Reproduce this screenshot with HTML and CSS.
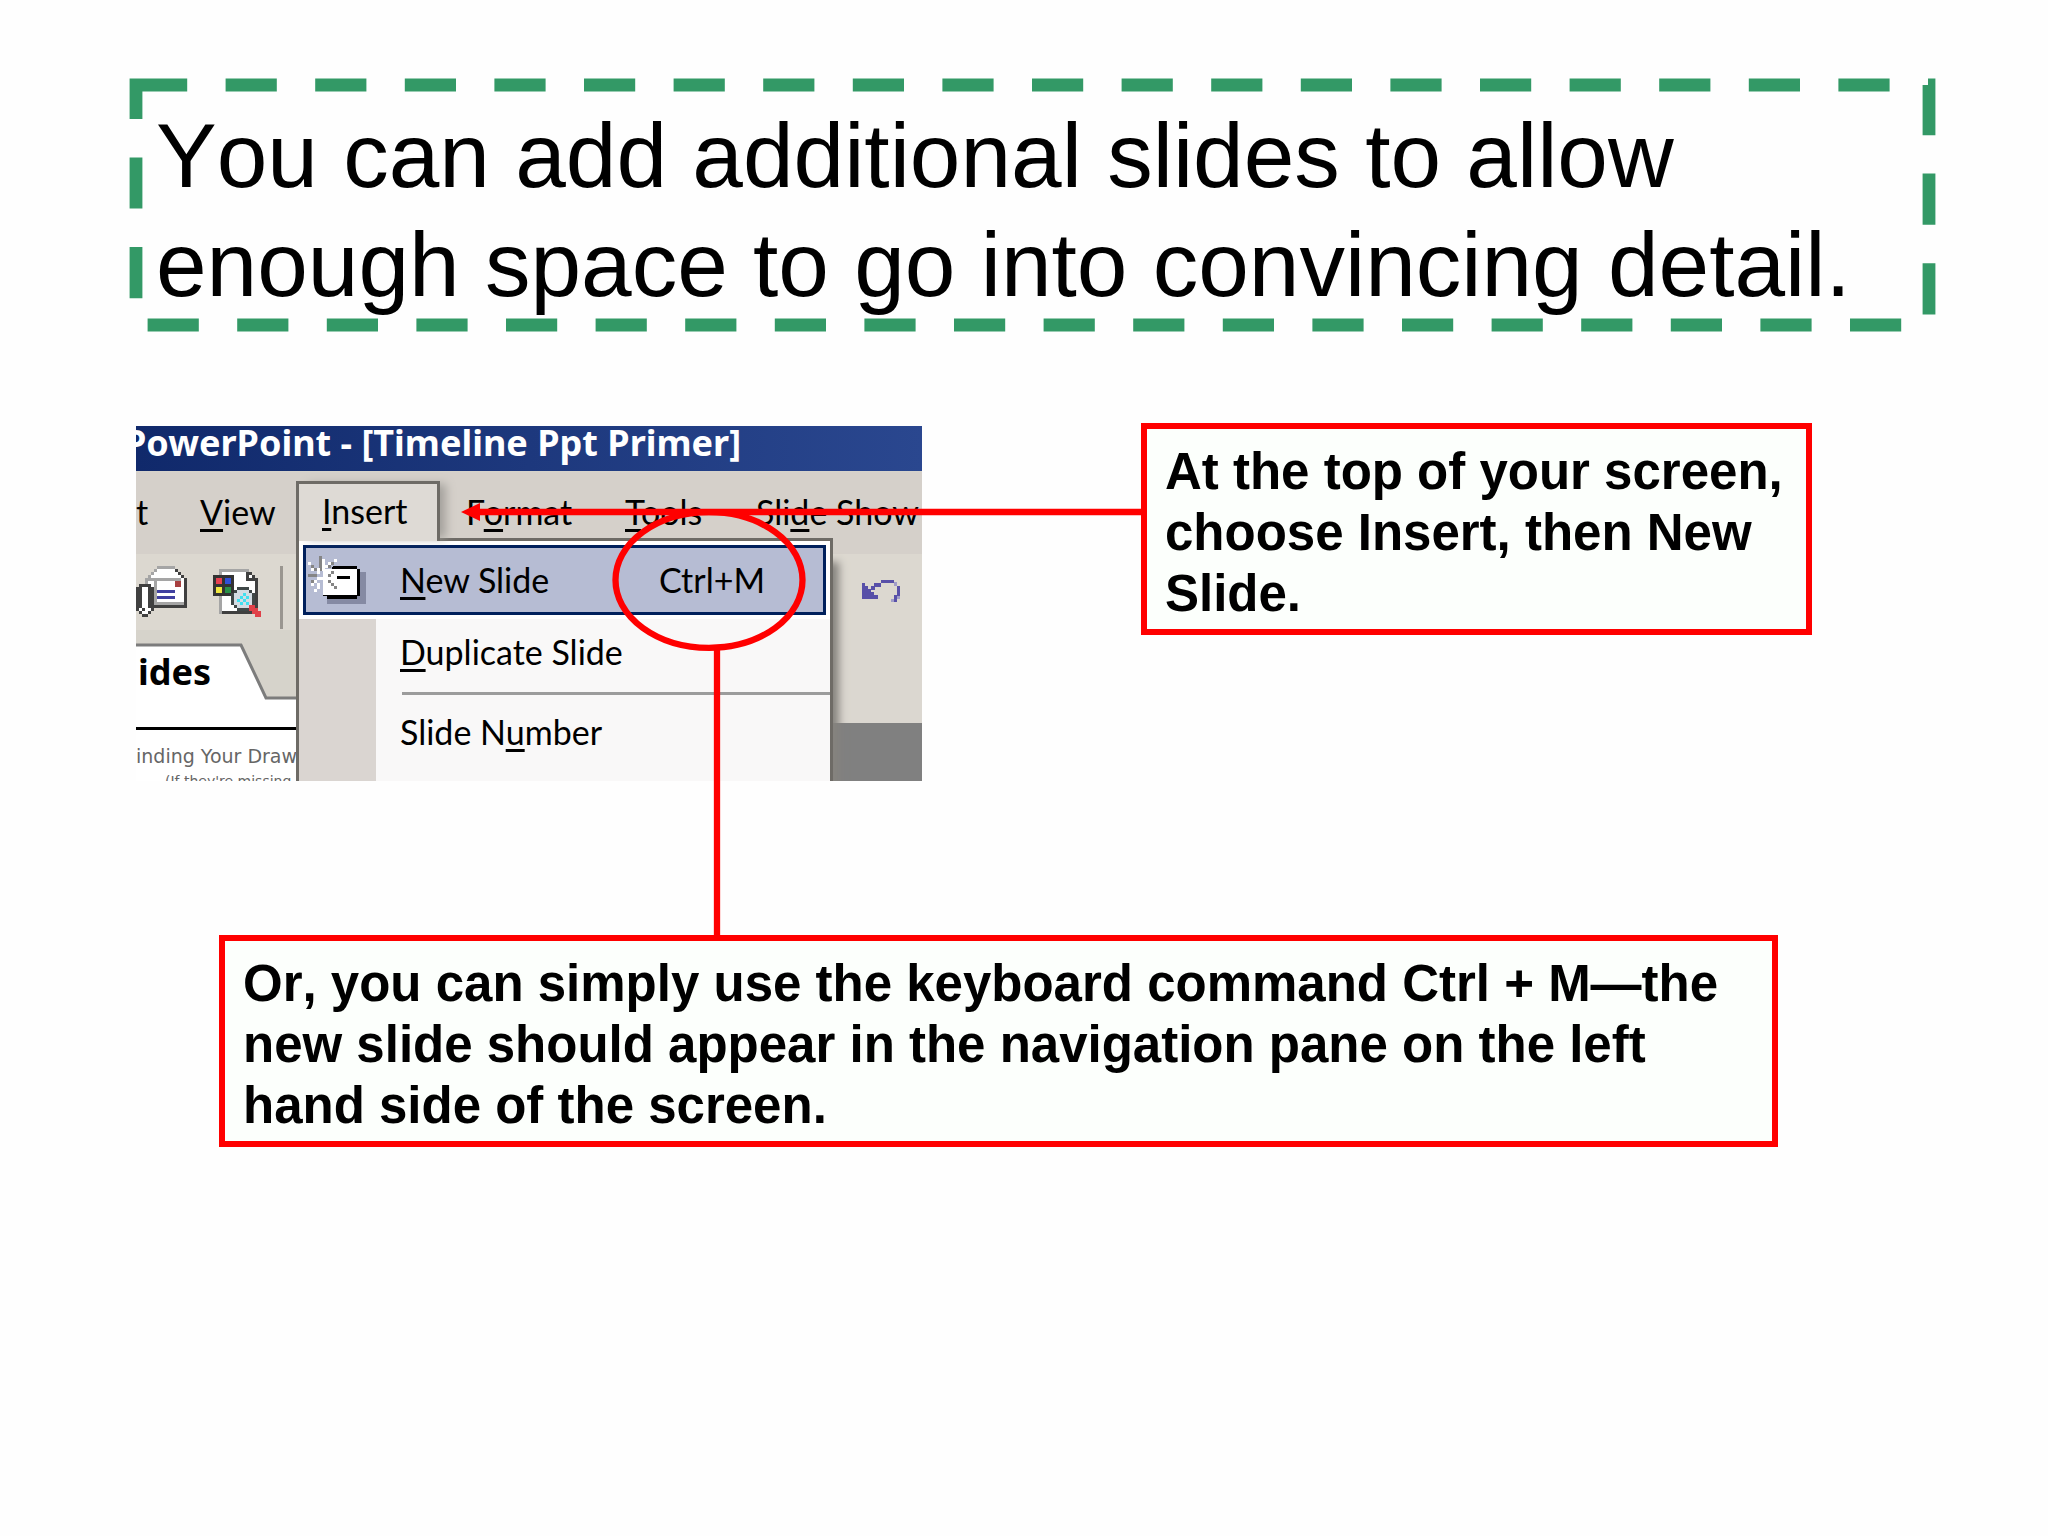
FILE: index.html
```html
<!DOCTYPE html>
<html lang="en">

<head>
    <meta charset="UTF-8">
    <title>Adding additional slides</title>
    <link rel="stylesheet" href="styles.css">
</head>

<body>
    <main class="slide">
        <header class="heading">
            <svg class="heading-border" aria-hidden="true">
                <rect class="dashes" />
            </svg>
            <h1>You can add additional slides to allow enough space to go into convincing detail.</h1>
        </header>

        <section class="row">
            <div class="shot">
                <div class="window">
                    <div class="titlebar"><span>PowerPoint - [Timeline Ppt Primer]</span></div>
                    <nav class="menubar">
                        <button>t</button>
                        <button><u>V</u>iew</button>
                        <button class="open"><u>I</u>nsert</button>
                        <button>F<u>o</u>rmat</button>
                        <button><u>T</u>ools</button>
                        <button>Sli<u>d</u>e Show</button>
                    </nav>
                    <div class="toolbar">
                        <button class="tool" aria-label="Mail">
                            <svg width="51" height="51" viewBox="0 0 17 17" shape-rendering="crispEdges">
                                <path fill="#fff" d="M7 1h6v1h1v1h1v1h1v9H6V7H3V5h1V4h1V3h1V2h1z" />
                                <path fill="#a5a5a5" d="M7 0h6v1H7zM6 1h1v1H6zM5 2h1v1H5zM4 3h1v1H4zM3 4h12v1H3zM3 5h1v2H3zM6 5h1v7h9v1H6z" />
                                <path fill="#404040" d="M13 1h1v1h-1zM14 2h1v1h-1zM15 3h1v1h-1zM16 4h1v10H6v-1h10z" />
                                <path fill="#a84040" d="M13 5h2v2h-2z" />
                                <path fill="#4040a0" d="M7 8h6v1H7zM7 10h6v1H7z" />
                                <path fill="#404040" d="M1 6h4v1h1v8H5v1H4v1H2v-1H1v-1H0V7h1z" />
                                <path fill="#fff" d="M2 7h2v8H2zM1 14h1v1H1zM4 14h1v1H4zM2 15h2v1H2z" />
                                <path fill="#404040" d="M2 14h1v1H2z" />
                            </svg>
                        </button>
                        <button class="tool" aria-label="Preview">
                            <svg width="48" height="48" viewBox="0 0 16 16" shape-rendering="crispEdges">
                                <path fill="#fff" d="M3 1h9v3h2v10H3z" />
                                <path fill="#a5a5a5" d="M2 0h10v1H3v14H2z" />
                                <path fill="#404040" d="M12 1h1v1h1v1h1v12H3v-1h11V4h-3V1z" />
                                <path fill="#fff" d="M12 2h1v1h-1z" />
                                <path fill="#333" d="M0 2h7v7H0z" />
                                <path fill="#e84050" d="M1 3h2v2H1z" />
                                <path fill="#3050d8" d="M4 3h2v2H4z" />
                                <path fill="#f0e840" d="M1 6h2v2H1z" />
                                <path fill="#289048" d="M4 6h2v2H4z" />
                                <path fill="#404848" d="M8 6h4v1h1v1h1v4h-1v1h-1v1H8v-1H7v-1H6V8h1V7h1z" />
                                <path fill="#d4dde4" d="M8 7h4v1h1v4h-1v1H8v-1H7V8h1z" />
                                <path fill="#40e0f0" d="M10 8h1v1h-1zM11 9h1v1h-1zM9 9h1v1H9zM8 10h1v1H8zM10 10h1v1h-1zM9 11h1v1H9zM11 11h1v1h-1z" />
                                <path fill="#e04048" d="M12 12h2v1h1v1h1v2h-2v-1h-1v-1h-1z" />
                            </svg>
                        </button>
                        <span class="divider"></span>
                        <button class="tool undo" aria-label="Undo">
                            <svg width="40" height="24" viewBox="0 0 40 24" shape-rendering="crispEdges">
                                <path fill="#5850a8" d="M0 3h3v3h3v3h3v3h3v3h4v4H0zM9 6h4v4H9zM12 3h7v4h-7zM19 0h13v3H19zM35 6h3v10h-3zM32 15h3v7h-3z" />
                                <path fill="#a09cc8" d="M32 2h3v4h-3zM35 16h3v3h-3zM29 19h3v3h-3z" />
                            </svg>
                        </button>
                    </div>
                    <div class="workspace">
                        <div class="pane">
                            <svg class="tab" width="160" height="57" viewBox="0 0 160 57" aria-hidden="true">
                                <path fill="#fff" stroke="#7c7c7c" stroke-width="3" d="M-3 2H105L130 55H163V60H-3z" />
                            </svg>
                            <strong class="tab-label">ides</strong>
                            <div class="outline">
                                <p>inding Your Draw</p>
                                <p class="second">(If they're missing</p>
                            </div>
                        </div>
                        <div class="canvas"></div>
                    </div>
                    <div class="dropdown">
                        <button class="item selected">
                            <svg width="58" height="48" viewBox="0 0 58 48" shape-rendering="crispEdges" aria-hidden="true">
                                <path fill="#858aa3" d="M19 16h39v32H19z" />
                                <path fill="#000" d="M25 10h24v3h3v27h-3v3H19v-3h-4V27h4z" />
                                <path fill="#fff" d="M15 13h34v26H15z" />
                                <path fill="#000" d="M29 20h13v3H29z" />
                                <path fill="#858585" d="M11 0h3v15h-3zM3 9h3v3H3zM0 18h9v3H0zM6 12h3v3H6zM3 24h3v3H3zM20 9h3v3h-3zM23 6h3v3h-3zM20 18h3v3h-3zM23 15h3v3h-3zM20 24h3v3h-3zM23 27h3v3h-3zM26 30h3v3h-3z" />
                                <path fill="#fff" d="M14 3h3v12h-3zM0 6h3v3H0zM3 12h3v3H3zM9 12h3v6H9zM17 9h3v3h-3zM20 6h3v3h-3zM26 3h3v3h-3zM6 24h3v3H6zM9 21h6v3H9zM3 27h3v3H3zM9 27h3v6H9zM6 33h3v3H6z" />
                            </svg>
                            <span><u>N</u>ew Slide</span>
                            <span class="shortcut">Ctrl+M</span>
                        </button>
                        <button class="item duplicate"><span><u>D</u>uplicate Slide</span></button>
                        <hr>
                        <button class="item number"><span>Slide N<u>u</u>mber</span></button>
                    </div>
                </div>
                <svg class="marks" aria-hidden="true">
                    <ellipse cx="573" cy="154" rx="93.5" ry="67.8" />
                    <path d="M1008 86H340M581 222V512" />
                    <path class="head" d="M325 86L344 77V95z" />
                </svg>
            </div>
            <p class="callout top">At the top of your screen, choose Insert, then New Slide.</p>
        </section>

        <p class="callout bottom">Or, you can simply use the keyboard command Ctrl + M—the new slide should appear in the navigation pane on the left hand side of the screen.</p>
    </main>
</body>

</html>
```

FILE: styles.css
```css
body {
    margin: 0;
    background-color: #fefefe;
    color: #000;
    font-family: "Liberation Sans", Arial, sans-serif;
    font-kerning: none;
}

p,
h1 {
    margin: 0;
}

button {
    margin: 0;
    padding: 0;
    border: 0;
    background: none;
    color: inherit;
    font: inherit;
    text-align: left;
}

svg {
    display: block;
}

.slide {
    padding: 79px 113px 79px 130px;
}

/* title */
.heading {
    position: relative;
    padding: 22px 26px 13px;
}

.heading h1 {
    font-size: 91px;
    font-weight: normal;
    line-height: 109px;
}

.heading-border {
    position: absolute;
    top: 0;
    left: 0;
    width: 100%;
    height: 100%;
    overflow: visible;
}

.dashes {
    x: 6px;
    y: 6px;
    width: calc(100% - 12px);
    height: calc(100% - 13px);
    fill: none;
    stroke: #339966;
    stroke-width: 12.8;
    stroke-dasharray: 51.2 38.4;
}

.row {
    display: flex;
    align-items: flex-start;
    margin-top: 91px;
    padding-left: 6px;
}

/* red boxes */
.callout {
    padding: 12px 18px 5px;
    border: 6px solid #f00;
    background-color: #fcfffc;
    font-size: 51px;
    font-weight: bold;
    line-height: 61px;
}

.top {
    flex: 1;
    margin: 0 123px 0 219px;
}

.bottom {
    margin: 154px 157px 0 89px;
}

/* program window */
.shot {
    position: relative;
    flex: none;
    margin-top: 3px;
}

.window {
    position: relative;
    display: flex;
    flex-direction: column;
    overflow: hidden;
    width: 786px;
    height: 355px;
    background-color: #d6d3cb;
    font-family: Lato, sans-serif;
    font-size: 34px;
    font-kerning: auto;
    line-height: 42px;
    white-space: nowrap;
}

u {
    text-decoration-thickness: 3px;
    text-underline-offset: 4px;
    text-decoration-skip-ink: none;
}

.titlebar {
    flex: none;
    height: 45px;
    margin-bottom: 1px;
    background: linear-gradient(to right, #10296b, #2a478f);
    color: #fff;
    font-family: "Noto Sans", sans-serif;
    font-size: 36px;
    font-weight: bold;
    line-height: 34px;
}

.titlebar span {
    margin-left: -12px;
}

.menubar {
    display: grid;
    flex: none;
    grid-template-columns: 64px 96px 170px 159px 131px 1fr;
    align-items: start;
    height: 73px;
    padding-top: 9px;
    background-color: #d5d0ca;
}

.menubar button {
    padding-top: 10px;
}

.menubar .open {
    z-index: 1;
    box-sizing: border-box;
    width: 144px;
    height: 60px;
    padding: 0 0 3px 23px;
    border: 3px solid #6e6b66;
    border-bottom: 0;
    background-color: #dedad5;
    box-shadow: 9px 0 9px -3px #a5a29d;
}

.toolbar {
    display: flex;
    flex: none;
    align-items: flex-start;
    height: 64px;
    padding-top: 12px;
    background-color: #dcd8d0;
}

.tool + .tool {
    margin: 3px 19px 0 26px;
}

.divider {
    width: 3px;
    height: 63px;
    background-color: #9a9690;
}

.toolbar .undo {
    margin: 14px 20px 0 auto;
}

.workspace {
    display: flex;
    flex: 1;
    justify-content: space-between;
    min-height: 0;
}

.pane {
    display: grid;
    grid-template-rows: 57px 1fr;
    width: 160px;
    margin-top: 13px;
    background-color: #fff;
}

.tab,
.tab-label {
    grid-area: 1 / 1;
}

.tab {
    background-color: #d6d3cb;
}

.tab-label {
    padding: 5px 2px;
    font-family: "Noto Sans", sans-serif;
    font-size: 36px;
    line-height: 48px;
}

.outline {
    margin-top: 27px;
    border-top: 3px solid #000;
    color: #666;
    font-family: "DejaVu Sans", sans-serif;
    font-size: 19px;
    line-height: 22px;
    padding-top: 15px;
}

.outline .second {
    padding-left: 29px;
    font-size: 14px;
    line-height: 28px;
}

.canvas {
    width: 89px;
    border-bottom: 58px solid #808080;
    background-color: #dbd7d0;
}

.dropdown {
    position: absolute;
    top: 112px;
    left: 160px;
    box-sizing: border-box;
    width: 537px;
    height: 250px;
    border: 3px solid #6e6b66;
    background: linear-gradient(to right, #dad5d1 77px, #f9f8f8 77px);
    box-shadow: 10px 20px 8px -4px #86837e;
}

.item {
    display: flex;
    width: 100%;
    padding-left: 101px;
}

.dropdown .selected {
    box-sizing: border-box;
    align-items: center;
    width: 531px;
    height: 78px;
    padding: 0 61px 0 5px;
    border: 4px solid #fff;
    outline: 3px solid #00205c;
    outline-offset: -7px;
    background-color: #b6bcd3;
}

.selected span {
    margin-left: 34px;
}

.selected .shortcut {
    margin-left: auto;
}

.duplicate {
    padding-top: 12px;
}

.dropdown hr {
    height: 3px;
    margin: 19px 0 0 103px;
    border: 0;
    background-color: #9c9c9c;
}

.number {
    padding-top: 16px;
}

/* ellipse, arrow and connector drawn over the window */
.marks {
    position: absolute;
    top: 0;
    left: 0;
    width: 100%;
    height: 100%;
    overflow: visible;
    fill: none;
    stroke: #f00;
    stroke-width: 6.3;
}

.head {
    fill: #f00;
    stroke: none;
}
```
